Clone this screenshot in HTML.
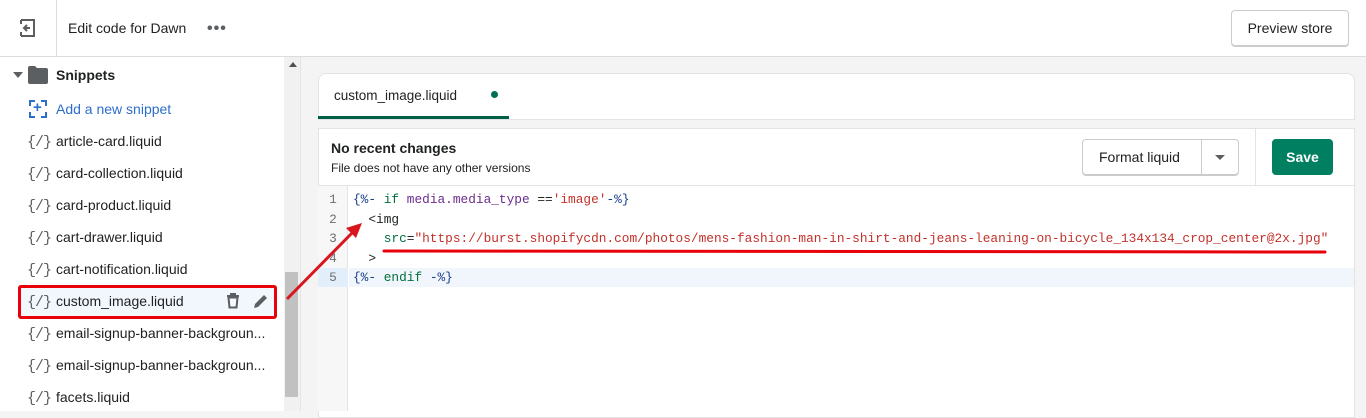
<!DOCTYPE html>
<html><head><meta charset="utf-8"><style>
*{box-sizing:border-box;margin:0;padding:0}
body{width:1366px;height:411px;overflow:hidden;background:#f4f4f4;font-family:"Liberation Sans",sans-serif;position:relative;color:#202223}
.a{position:absolute}
.top{left:0;top:0;width:1366px;height:57px;background:#fff;border-bottom:1px solid #dcdcdc}
.side{left:0;top:57px;width:284px;height:354px;background:#fff}
.item{position:absolute;left:27px;font-size:14px;color:#202223;white-space:nowrap}
.item .ic{display:inline-block;width:29px;font-family:"Liberation Mono",monospace;font-size:15px;color:#5c5f62;letter-spacing:-1px}
.code{font-family:"Liberation Mono",monospace;font-size:12.8px;white-space:pre;position:absolute;left:353px;color:#202223}
.ln{position:absolute;left:318px;width:30px;text-align:center;font-family:"Liberation Mono",monospace;font-size:12.8px;color:#6d7175}
.p{color:#1a3e8c}.k{color:#00703c}.v{color:#6a2e8c}.s{color:#c4312a}
</style></head><body>
<div class="a top"></div>
<div class="a" style="left:56px;top:0;width:1px;height:56px;background:#dcdcdc"></div>
<svg class="a" style="left:18px;top:18px" width="20" height="20" viewBox="0 0 20 20"><path d="M3 2h13v16H3M3 2v4M3 14v4" fill="none" stroke="#5c5f62" stroke-width="2"/><path d="M12 10H6M9 7l-3 3 3 3" fill="none" stroke="#5c5f62" stroke-width="2"/></svg>
<div class="a" style="left:68px;top:20px;font-size:14px;color:#202223">Edit code for Dawn</div>
<div class="a" style="left:207px;top:20px;font-size:16px;color:#5c5f62;font-weight:bold;letter-spacing:1px">•••</div>
<div class="a" style="left:1231px;top:10px;width:118px;height:36px;border:1px solid #c9cccf;border-radius:4px;box-shadow:0 1px 0 #ccc;font-size:14px;text-align:center;line-height:34px">Preview store</div>

<div class="a side"></div>
<div class="a" style="left:284px;top:57px;width:16px;height:354px;background:#f1f1f1"></div>
<div class="a" style="left:289px;top:62px;width:0;height:0;border-left:4px solid transparent;border-right:4px solid transparent;border-bottom:5px solid #505050"></div>
<div class="a" style="left:285px;top:272px;width:13px;height:125px;background:#c1c1c1"></div>
<div class="a" style="left:300px;top:57px;width:1px;height:354px;background:#e4e4e4"></div>

<div class="a" style="left:13px;top:72px;border-left:5px solid transparent;border-right:5px solid transparent;border-top:6px solid #5c5f62"></div>
<svg class="a" style="left:28px;top:66px" width="20" height="18"><path d="M0 2q0-2 2-2h5l2 2h9q2 0 2 2v12q0 2-2 2H2q-2 0-2-2z" fill="#5c5f62"/></svg>
<div class="a" style="left:56px;top:67px;font-size:14px;font-weight:bold;color:#202223">Snippets</div>
<div class="a" style="left:29px;top:100px;width:18px;height:18px;border:2px dashed #2c6ecb"></div>
<div class="a" style="left:33px;top:99px;font-size:15px;color:#2c6ecb;font-weight:bold">+</div>
<div class="a" style="left:56px;top:101px;font-size:14px;color:#2c6ecb">Add a new snippet</div>

<div class="item" style="top:133px"><span class="ic">{/}</span>article-card.liquid</div>
<div class="item" style="top:165px"><span class="ic">{/}</span>card-collection.liquid</div>
<div class="item" style="top:197px"><span class="ic">{/}</span>card-product.liquid</div>
<div class="item" style="top:229px"><span class="ic">{/}</span>cart-drawer.liquid</div>
<div class="item" style="top:261px"><span class="ic">{/}</span>cart-notification.liquid</div>
<div class="a" style="left:18px;top:285px;width:259px;height:34px;background:#f2f7fe;border:3px solid #e8000b;border-radius:3px"></div>
<div class="item" style="top:293px"><span class="ic">{/}</span>custom_image.liquid</div>
<svg class="a" style="left:224px;top:292px" width="18" height="18" viewBox="0 0 18 18"><path d="M3 4h12M7 4V2h4v2M4.5 5.5l1 10h7l1-10z" fill="none" stroke="#5c5f62" stroke-width="2"/><path d="M7.5 8v5M10.5 8v5" stroke="#fff" stroke-width="1.3"/></svg>
<svg class="a" style="left:252px;top:292px" width="18" height="18" viewBox="0 0 18 18"><path d="M2 16l1-4L12 3l3 3-9 9z" fill="#5c5f62"/></svg>
<div class="item" style="top:325px"><span class="ic">{/}</span>email-signup-banner-backgroun...</div>
<div class="item" style="top:357px"><span class="ic">{/}</span>email-signup-banner-backgroun...</div>
<div class="item" style="top:389px"><span class="ic">{/}</span>facets.liquid</div>

<div class="a" style="left:318px;top:73px;width:1037px;height:47px;background:#fff;border:1px solid #e1e3e5;border-radius:8px 8px 0 0"></div>
<div class="a" style="left:334px;top:88px;font-size:13.5px;color:#202223">custom_image.liquid</div>
<div class="a" style="left:491px;top:91px;width:7px;height:7px;border-radius:50%;background:#006e52"></div>
<div class="a" style="left:318px;top:116px;width:191px;height:3px;background:#005e46"></div>

<div class="a" style="left:318px;top:128px;width:1037px;height:290px;background:#fff;border:1px solid #e1e3e5"></div>
<div class="a" style="left:331px;top:140px;font-size:14px;font-weight:bold;color:#202223">No recent changes</div>
<div class="a" style="left:331px;top:161px;font-size:12px;color:#202223">File does not have any other versions</div>
<div class="a" style="left:1255px;top:129px;width:1px;height:56px;background:#e1e3e5"></div>
<div class="a" style="left:1082px;top:139px;width:157px;height:36px;border:1px solid #c9cccf;border-radius:4px;box-shadow:0 1px 0 #ccc"></div>
<div class="a" style="left:1099px;top:149px;font-size:14px;color:#202223">Format liquid</div>
<div class="a" style="left:1201px;top:140px;width:1px;height:34px;background:#c9cccf"></div>
<div class="a" style="left:1215px;top:155px;border-left:5px solid transparent;border-right:5px solid transparent;border-top:5px solid #5c5f62"></div>
<div class="a" style="left:1272px;top:139px;width:61px;height:36px;background:#008060;border-radius:4px;color:#fff;font-size:14px;font-weight:bold;text-align:center;line-height:36px">Save</div>
<div class="a" style="left:318px;top:185px;width:1037px;height:1px;background:#e1e3e5"></div>

<div class="a" style="left:318px;top:186px;width:30px;height:225px;background:#f7f7f7;border-right:1px solid #e1e3e5"></div>
<div class="a" style="left:318px;top:268px;width:30px;height:19px;background:#e2eef9"></div>
<div class="a" style="left:349px;top:268px;width:1005px;height:19px;background:#f1f6fc"></div>
<div class="ln" style="top:192px">1</div><div class="ln" style="top:212px">2</div><div class="ln" style="top:231px">3</div><div class="ln" style="top:251px">4</div><div class="ln" style="top:270px">5</div>
<div class="code" style="top:192px"><span class="p">{%-</span> <span class="k">if</span> <span class="v">media.media_type</span> ==<span class="s">'image'</span><span class="p">-%}</span></div>
<div class="code" style="top:212px">  &lt;img</div>
<div class="code" style="top:231px">    <span class="k">src</span>=<span class="s">"https://burst.shopifycdn.com/photos/mens-fashion-man-in-shirt-and-jeans-leaning-on-bicycle_134x134_crop_center@2x.jpg"</span></div>
<div class="code" style="top:251px">  &gt;</div>
<div class="code" style="top:270px"><span class="p">{%-</span> <span class="k">endif</span> <span class="p">-%}</span></div>

<svg class="a" style="left:0;top:0" width="1366" height="411"><line x1="384" y1="251" x2="1325" y2="252" stroke="#e8000b" stroke-width="3" stroke-linecap="round"/><line x1="287" y1="299" x2="352" y2="233" stroke="#d8161e" stroke-width="3"/><path d="M362 223l-16 5 10 10z" fill="#d8161e"/></svg>
</body></html>
